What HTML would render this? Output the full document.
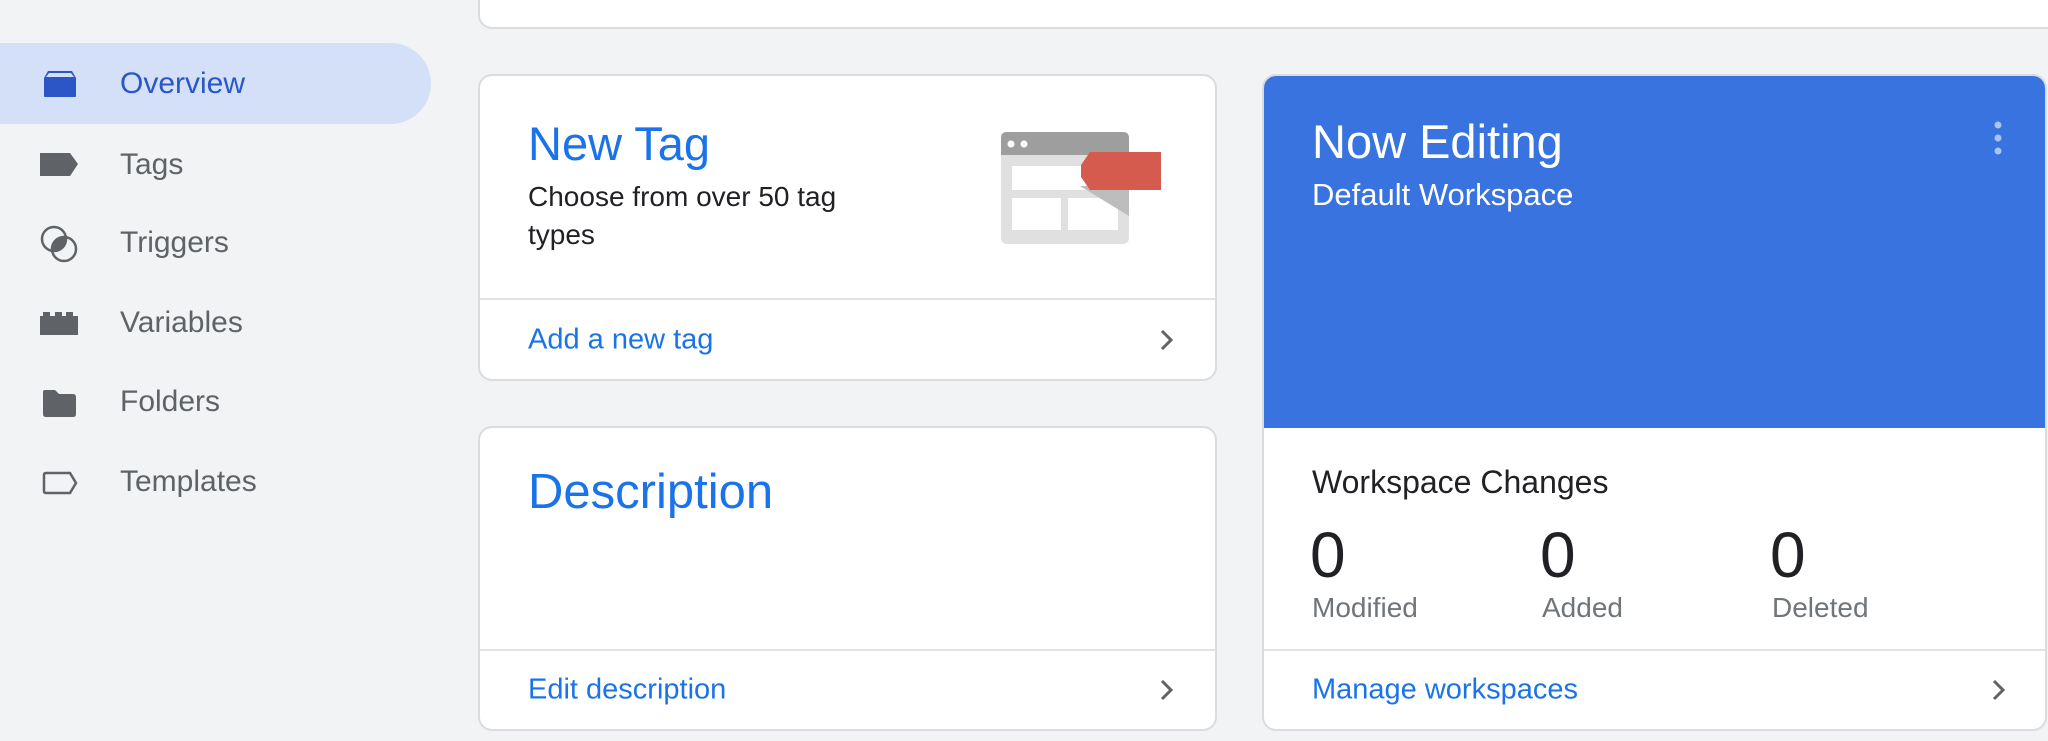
<!DOCTYPE html>
<html><head><meta charset="utf-8"><style>
*{margin:0;padding:0;box-sizing:border-box}
body{width:2048px;height:741px;background:#f1f3f4;font-family:"Liberation Sans",sans-serif;position:relative;overflow:hidden}
.a{position:absolute}
.card{position:absolute;background:#fff;border:2px solid #dadce0;border-radius:14px;overflow:hidden}
.nav{position:absolute;left:120px;font-size:30px;color:#5f6368;transform:translateY(-50%)}
.ic{position:absolute;left:40px}
.link{position:absolute;font-size:29px;color:#1a73e8;transform:translateY(-50%)}
.chev{position:absolute;transform:translateY(-50%)}
.div{position:absolute;left:0;right:0;height:2px;background:#e0e2e6}
</style></head><body>
<div class="card" style="left:478px;top:-20px;width:1600px;height:49px"></div>
<div class="a" style="left:0;top:43px;width:431px;height:81px;background:#d3e0f8;border-radius:0 41px 41px 0"></div>
<svg class="ic" style="top:70px" width="40" height="28" viewBox="0 0 40 28"><path d="M4 8 L8 1 H32 L36 8 V26 Q36 27 35 27 H5 Q4 27 4 26Z" fill="#2a56c6"/><path d="M6 7 L9 3 H31 L34 7Z" fill="#d3e0f8"/></svg>
<div class="nav" style="top:84px;color:#2a56c6">Overview</div>
<svg class="ic" style="top:153px" width="40" height="24"><path d="M0 0 H30 L38 11 L30 23 H0Z" fill="#5f6368"/></svg>
<div class="nav" style="top:165px">Tags</div>
<svg class="ic" style="top:225px" width="40" height="38"><circle cx="14" cy="14" r="12" fill="none" stroke="#5f6368" stroke-width="2.5"/><circle cx="24" cy="24" r="12" fill="none" stroke="#5f6368" stroke-width="2.5"/><path d="M12 26 A12 12 0 0 1 26 12 A12 12 0 0 1 12 26Z" fill="#5f6368"/></svg>
<div class="nav" style="top:243px">Triggers</div>
<svg class="ic" style="top:312px" width="40" height="24"><path d="M0 4 H3 V0 H10 V4 H15 V0 H22 V4 H26 V0 H33 V4 H38 V23 H0Z" fill="#5f6368"/></svg>
<div class="nav" style="top:323px">Variables</div>
<svg class="ic" style="top:390px" width="40" height="28"><path d="M3 2 Q3 0 5 0 H15 L19 4 H33 Q36 4 36 7 V24 Q36 27 33 27 H6 Q3 27 3 24Z" fill="#5f6368"/></svg>
<div class="nav" style="top:402px">Folders</div>
<svg class="ic" style="top:471px" width="40" height="24"><path d="M6 2 H30 L36 12 L30 22 H6 Q4 22 4 20 V4 Q4 2 6 2Z" fill="none" stroke="#5f6368" stroke-width="2.5"/></svg>
<div class="nav" style="top:482px">Templates</div>

<div class="card" style="left:478px;top:74px;width:739px;height:307px">
<div class="a" style="left:48px;top:40px;font-size:47px;color:#1a73e8">New Tag</div>
<div class="a" style="left:48px;top:102px;font-size:28px;line-height:38px;color:#202124">Choose from over 50 tag<br>types</div>
<svg class="a" style="left:521px;top:56px" width="165" height="114" viewBox="0 0 165 114"><rect x="0" y="0" width="128" height="112" rx="6" fill="#e0e0e0"/><path d="M0 6 Q0 0 6 0 H122 Q128 0 128 6 V23 H0Z" fill="#9e9e9e"/><circle cx="10" cy="12" r="3.5" fill="#fff"/><circle cx="23" cy="12" r="3.5" fill="#fff"/><rect x="11" y="34" width="106" height="24" fill="#fff"/><rect x="11" y="66" width="49" height="32" fill="#fff"/><rect x="67" y="66" width="50" height="32" fill="#fff"/><path d="M79 54 L128 54 L128 84Z" fill="#bdbdbd"/><path d="M89 20 H160 V58 H89 L80 45 V33Z" fill="#d45b4d"/></svg>
<div class="div" style="top:222px"></div>
<div class="link" style="left:48px;top:264px">Add a new tag</div>
<svg class="chev" style="left:680px;top:264px" width="14" height="22"><path d="M2 2 L11 11 L2 20" fill="none" stroke="#5f6368" stroke-width="3"/></svg>
</div>

<div class="card" style="left:478px;top:426px;width:739px;height:305px">
<div class="a" style="left:48px;top:36px;font-size:49px;color:#1a73e8">Description</div>
<div class="div" style="top:221px"></div>
<div class="link" style="left:48px;top:262px">Edit description</div>
<svg class="chev" style="left:680px;top:262px" width="14" height="22"><path d="M2 2 L11 11 L2 20" fill="none" stroke="#5f6368" stroke-width="3"/></svg>
</div>

<div class="card" style="left:1262px;top:74px;width:785px;height:657px">
<div class="a" style="left:0;top:0;right:0;height:352px;background:#3873e0"></div>
<div class="a" style="left:48px;top:38px;font-size:47px;color:#fff">Now Editing</div>
<div class="a" style="left:48px;top:101px;font-size:31px;color:#fff">Default Workspace</div>
<svg class="a" style="left:728px;top:44px" width="12" height="36"><circle cx="6" cy="5" r="3.5" fill="#a9c3f2"/><circle cx="6" cy="18" r="3.5" fill="#a9c3f2"/><circle cx="6" cy="31" r="3.5" fill="#a9c3f2"/></svg>
<div class="a" style="left:48px;top:388px;font-size:32px;color:#202124">Workspace Changes</div>
<div class="a" style="left:46px;top:442px;font-size:64px;color:#202124">0</div>
<div class="a" style="left:276px;top:442px;font-size:64px;color:#202124">0</div>
<div class="a" style="left:506px;top:442px;font-size:64px;color:#202124">0</div>
<div class="a" style="left:48px;top:516px;font-size:28px;color:#70757a">Modified</div>
<div class="a" style="left:278px;top:516px;font-size:28px;color:#70757a">Added</div>
<div class="a" style="left:508px;top:516px;font-size:28px;color:#70757a">Deleted</div>
<div class="div" style="top:573px"></div>
<div class="link" style="left:48px;top:614px">Manage workspaces</div>
<svg class="chev" style="left:728px;top:614px" width="14" height="22"><path d="M2 2 L11 11 L2 20" fill="none" stroke="#5f6368" stroke-width="3"/></svg>
</div>
</body></html>
